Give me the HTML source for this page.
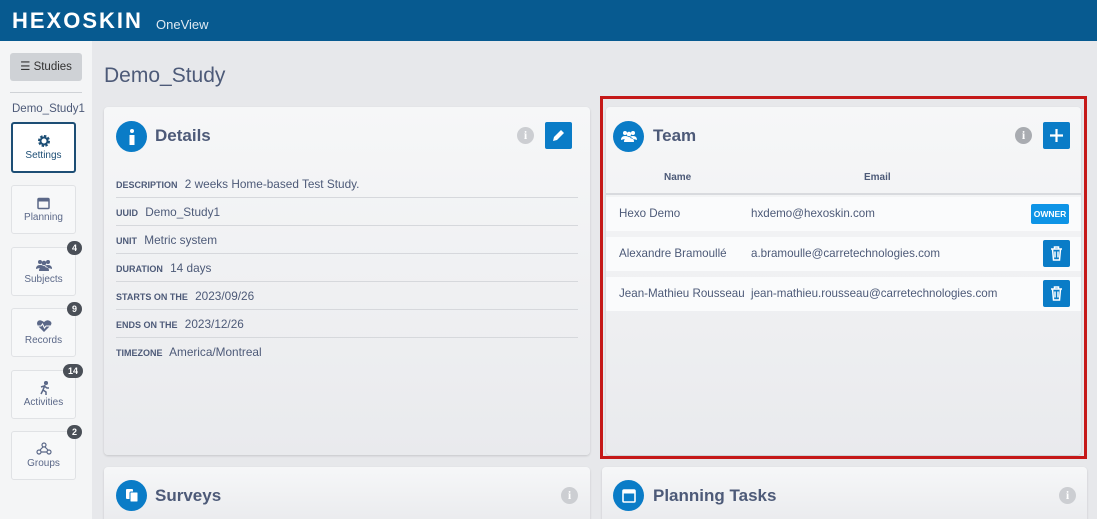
<!DOCTYPE html>
<html><head><meta charset="utf-8"><style>
*{box-sizing:border-box;margin:0;padding:0}
html,body{width:1097px;height:519px;overflow:hidden}
body{background:#e7e8eb;font-family:"Liberation Sans",sans-serif;color:#4d5a78;position:relative}
.hdr{position:absolute;left:0;top:0;width:1097px;height:41px;background:#075a90;color:#fff}
.logo{position:absolute;left:12px;top:8px;font-size:22px;font-weight:bold;letter-spacing:2px}
.ov{position:absolute;left:156px;top:17px;font-size:13px;color:#dfe9f2}
.side{position:absolute;left:0;top:41px;width:92px;height:478px;background:#f4f5f6}
.stud{position:absolute;left:10px;top:12px;width:72px;height:28px;background:#cfd2d6;border-radius:3px;font-size:11.5px;color:#333;text-align:center;line-height:28px}
.sep{position:absolute;left:10px;top:51px;width:72px;border-top:1px solid #cfd2d6}
.ds{position:absolute;left:12px;top:62px;font-size:11.5px;color:#4d5a78}
.nb{position:absolute;left:11px;width:65px;height:49px;border:1px solid #e0e2e5;border-radius:3px;background:#f7f8f9;text-align:center;font-size:10px;color:#5b6888}
.nb svg{display:block;margin:10px auto 2px}
.nb.act{border:2px solid #1d4e75;color:#1d4e75;background:#fff}
.bd{position:absolute;background:#4a4f57;color:#fff;font-size:9px;font-weight:bold;border-radius:8px;height:14px;line-height:14px;text-align:center;padding:0 5px}
h1{position:absolute;left:104px;top:64px;font-size:21px;font-weight:normal;color:#4d5a78}
.card{position:absolute;background:linear-gradient(#f6f7f8,#e9eaed);border-radius:4px;box-shadow:0 1px 2px rgba(0,0,0,.15)}
.ci{position:absolute;width:31px;height:31px;border-radius:50%;background:#0a7cc7;color:#fff;text-align:center}
.ci svg{display:block;margin:8px auto}
.ct{position:absolute;font-size:17px;font-weight:bold;color:#4d5a78}
.gi{position:absolute;width:17px;height:17px;border-radius:50%;background:#ccced2;color:#fff;font-size:12px;font-weight:bold;text-align:center;line-height:17px;font-family:"Liberation Serif",serif}
.bb{position:absolute;width:27px;height:27px;background:#0a7cc7;border-radius:2px;color:#fff;text-align:center}
.bb svg{display:block;margin:6px auto}
.row{position:absolute;left:116px;width:462px;border-bottom:1px solid #d6d8dc;height:28px;font-size:11.8px;line-height:28px}
.row b{font-size:9px;margin-right:4px}
.tr{position:absolute;left:606px;width:475px;height:34px;background:#fafbfc;font-size:11.6px;line-height:34px;color:#4d5a78}
.tr span{position:absolute}
.red{position:absolute;left:600px;top:96px;width:487px;height:363px;border:3px solid #c51818}
</style></head><body>
<div class="hdr"><div class="logo">HEXOSKIN</div><div class="ov">OneView</div></div>
<div class="side">
<div class="stud">☰ Studies</div><div class="sep"></div><div class="ds">Demo_Study1</div>
</div>
<div class="nb act" style="top:122px;height:51px"><svg width="14" height="14" viewBox="0 0 14 14"><circle cx="7" cy="7" r="4.5" fill="none" stroke="#1d4e75" stroke-width="3" stroke-dasharray="2.2 1.3"/><circle cx="7" cy="7" r="3.5" fill="none" stroke="#1d4e75" stroke-width="2"/></svg>Settings</div>
<div class="nb" style="top:185px"><svg width="13" height="14" viewBox="0 0 13 14"><rect x="1" y="2.5" width="11" height="10" rx="1" fill="none" stroke="#5b6888" stroke-width="1.5"/><rect x="1" y="2.5" width="11" height="3" fill="#5b6888"/></svg>Planning</div>
<div class="nb" style="top:247px"><svg width="16" height="14" viewBox="0 0 16 14"><g fill="#5b6888"><circle cx="4" cy="4" r="2"/><circle cx="12" cy="4" r="2"/><circle cx="8" cy="5" r="2.3"/><path d="M0 11q0-4 4-4t3 2zM16 11q0-4-4-4t-3 2zM3 13q0-5 5-5t5 5z"/></g></svg>Subjects</div>
<div class="nb" style="top:308px"><svg width="16" height="14" viewBox="0 0 16 14"><path d="M8 13L2 7Q0 4 2 2T8 3Q11 0 14 2T14 7z" fill="#5b6888"/><path d="M2 7h3l1.5-2 2 4 1.5-2h4" stroke="#fff" fill="none" stroke-width="1"/></svg>Records</div>
<div class="nb" style="top:370px"><svg width="12" height="14" viewBox="0 0 12 14"><g stroke="#5b6888" stroke-width="1.5" fill="none"><circle cx="8" cy="2" r="1.3" fill="#5b6888"/><path d="M7 4L5 9l3 2v3M5 9l-2 4M6 5l3 2 2 0M6 5L3 6"/></g></svg>Activities</div>
<div class="nb" style="top:431px"><svg width="16" height="14" viewBox="0 0 16 14"><g fill="none" stroke="#5b6888" stroke-width="1.2"><circle cx="8" cy="3" r="2"/><circle cx="3" cy="10" r="2"/><circle cx="13" cy="10" r="2"/><path d="M7 5l-3 3M9 5l3 3M5 10h6"/></g></svg>Groups</div>
<div class="bd" style="left:67px;top:241px">4</div>
<div class="bd" style="left:67px;top:302px">9</div>
<div class="bd" style="left:63px;top:364px">14</div>
<div class="bd" style="left:67px;top:425px">2</div>
<h1>Demo_Study</h1>
<div class="card" style="left:104px;top:107px;width:486px;height:348px"></div>
<div class="ci" style="left:116px;top:121px"><svg width="6" height="16" viewBox="0 0 6 16"><circle cx="3" cy="2" r="2" fill="#fff"/><rect x="0.5" y="6" width="5" height="10" fill="#fff"/></svg></div>
<div class="ct" style="left:155px;top:126px">Details</div>
<div class="gi" style="left:517px;top:127px">i</div>
<div class="bb" style="left:545px;top:122px"><svg width="15" height="15" viewBox="0 0 15 15"><path d="M2 13l1-4 7-7 3 3-7 7z" fill="#fff"/></svg></div>
<div class="row" style="top:170px"><b>DESCRIPTION</b> 2 weeks Home-based Test Study.</div>
<div class="row" style="top:198px"><b>UUID</b> Demo_Study1</div>
<div class="row" style="top:226px"><b>UNIT</b> Metric system</div>
<div class="row" style="top:254px"><b>DURATION</b> 14 days</div>
<div class="row" style="top:282px"><b>STARTS ON THE</b> 2023/09/26</div>
<div class="row" style="top:310px"><b>ENDS ON THE</b> 2023/12/26</div>
<div class="row" style="top:338px;border:none"><b>TIMEZONE</b> America/Montreal</div>
<div class="card" style="left:606px;top:107px;width:475px;height:348px"></div>
<div class="ci" style="left:613px;top:121px"><svg width="16" height="14" viewBox="0 0 16 14"><g fill="#fff"><circle cx="4" cy="4" r="2"/><circle cx="12" cy="4" r="2"/><circle cx="8" cy="5" r="2.3"/><path d="M0 11q0-4 4-4t3 2zM16 11q0-4-4-4t-3 2zM3 13q0-5 5-5t5 5z"/></g></svg></div>
<div class="ct" style="left:653px;top:126px">Team</div>
<div class="gi" style="left:1015px;top:127px;background:#a9acb1">i</div>
<div class="bb" style="left:1043px;top:122px"><svg width="15" height="15" viewBox="0 0 15 15"><path d="M7.5 1v13M1 7.5h13" stroke="#fff" stroke-width="2.2"/></svg></div>
<div style="position:absolute;left:664px;top:172px;font-size:10px;font-weight:bold">Name</div>
<div style="position:absolute;left:864px;top:172px;font-size:10px;font-weight:bold">Email</div>
<div style="position:absolute;left:606px;top:193px;width:475px;border-top:2px solid #d8dade"></div>
<div class="tr" style="top:197px"><span style="left:13px">Hexo Demo</span><span style="left:145px">hxdemo@hexoskin.com</span><span style="left:425px;top:7px;width:38px;height:20px;background:#0e94e6;color:#fff;font-size:8.5px;font-weight:bold;line-height:20px;text-align:center;border-radius:2px">OWNER</span></div>
<div class="tr" style="top:237px"><span style="left:13px">Alexandre Bramoullé</span><span style="left:145px">a.bramoulle@carretechnologies.com</span><span class="bb" style="left:437px;top:3px"><svg width="13" height="15" viewBox="0 0 13 15"><g fill="none" stroke="#fff" stroke-width="1.5"><path d="M1 3h11M4.5 3V1h4v2M2.5 3l1 11h6l1-11M5 5.5v6M8 5.5v6"/></g></svg></span></div>
<div class="tr" style="top:277px"><span style="left:13px">Jean-Mathieu Rousseau</span><span style="left:145px">jean-mathieu.rousseau@carretechnologies.com</span><span class="bb" style="left:437px;top:3px"><svg width="13" height="15" viewBox="0 0 13 15"><g fill="none" stroke="#fff" stroke-width="1.5"><path d="M1 3h11M4.5 3V1h4v2M2.5 3l1 11h6l1-11M5 5.5v6M8 5.5v6"/></g></svg></span></div>
<div class="red"></div>
<div class="card" style="left:104px;top:467px;width:486px;height:60px"></div>
<div class="ci" style="left:116px;top:480px"><svg width="14" height="15" viewBox="0 0 14 15"><rect x="1" y="1" width="7" height="10" rx="1" fill="#fff"/><rect x="5" y="4" width="8" height="10" rx="1" fill="#fff" stroke="#0a7cc7"/></svg></div>
<div class="ct" style="left:155px;top:486px">Surveys</div>
<div class="gi" style="left:561px;top:487px">i</div>
<div class="card" style="left:602px;top:467px;width:485px;height:60px"></div>
<div class="ci" style="left:613px;top:480px"><svg width="14" height="15" viewBox="0 0 14 15"><rect x="1" y="2" width="12" height="12" rx="1" fill="none" stroke="#fff" stroke-width="1.6"/><rect x="1" y="2" width="12" height="3.5" fill="#fff"/></svg></div>
<div class="ct" style="left:653px;top:486px">Planning Tasks</div>
<div class="gi" style="left:1059px;top:487px">i</div>
</body></html>
